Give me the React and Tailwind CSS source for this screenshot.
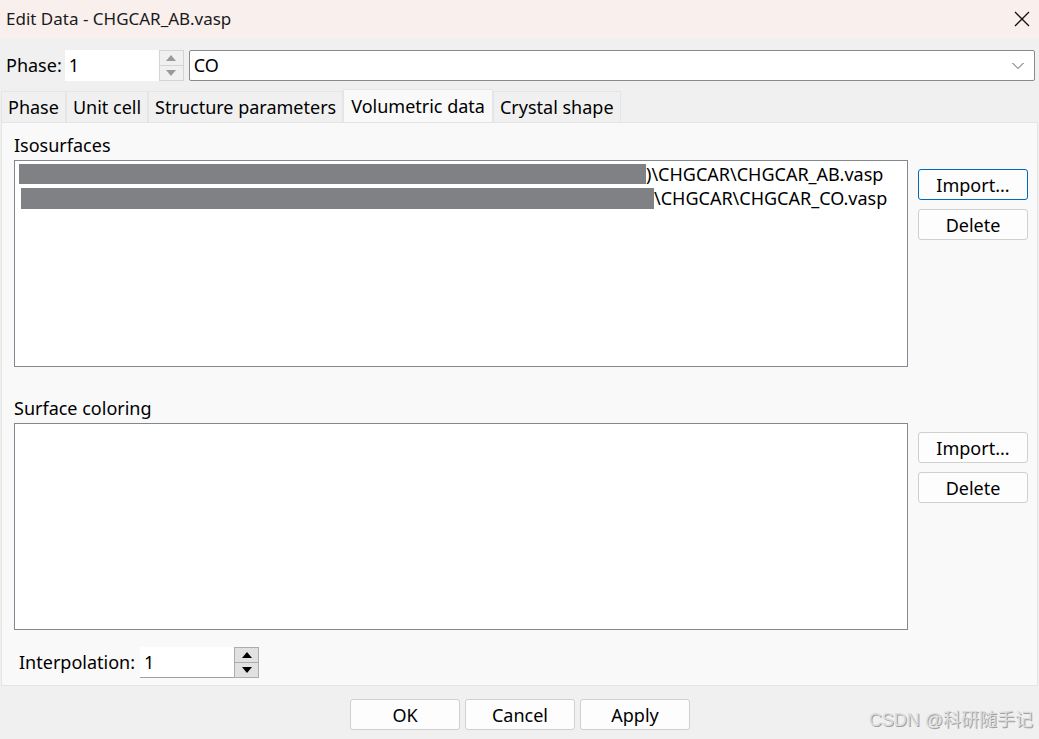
import React from "react";

const font = { fontFamily: '"Noto Sans", "Open Sans", sans-serif' };

function Spinner({ dark }) {
  const arrow = dark ? "#000000" : "#9a9a9a";
  return (
    <div className={`flex h-full w-[25px] flex-col border ${dark ? "border-[#adadad] bg-[#e1e1e1]" : "border-[#d4d4d4] bg-[#f0f0f0]"}`}>
      <div className={`flex flex-1 items-center justify-center border-b ${dark ? "border-[#adadad]" : "border-[#d4d4d4]"}`}>
        <svg width="10" height="6" viewBox="0 0 10 6"><path d="M0 6 L5 0 L10 6 Z" fill={arrow} /></svg>
      </div>
      <div className="flex flex-1 items-center justify-center">
        <svg width="10" height="6" viewBox="0 0 10 6"><path d="M0 0 L5 6 L10 0 Z" fill={arrow} /></svg>
      </div>
    </div>
  );
}

function SideButton({ children, focused }) {
  return (
    <button
      className={`h-[31px] w-[110px] rounded-[3px] border bg-[#fdfdfd] text-[18px] leading-none text-black ${focused ? "border-[#0067c0]" : "border-[#d0d0d0]"}`}
    >
      {children}
    </button>
  );
}

function Tab({ label, active }) {
  return active ? (
    <div className="-mb-px flex h-[34px] items-center border border-b-0 border-[#e5e5e5] bg-[#f9f9f9] px-[7px] text-[18px]">
      {label}
    </div>
  ) : (
    <div className="mt-[2px] flex h-[31px] items-center border border-b-0 border-[#e5e5e5] bg-[#f0f0f0] px-[6px] text-[18px]">
      {label}
    </div>
  );
}

export default function App() {
  return (
    <div className="flex h-[739px] w-[1039px] flex-col overflow-hidden bg-[#f0f0f0] text-black" style={font}>
      <div className="flex h-[38px] items-center justify-between bg-[#f9efed] pl-[6px] pr-[8px]">
        <span className="text-[17px] text-[#1a1a1a]">Edit Data - CHGCAR_AB.vasp</span>
        <svg width="16" height="16" viewBox="0 0 16 16" className="mr-[1px]">
          <path d="M1 1 L15 15 M15 1 L1 15" stroke="#111" strokeWidth="1.3" />
        </svg>
      </div>

      <div className="mt-[12px] flex h-[31px] items-center pl-[6px] pr-[4px]">
        <span className="mr-[3px] text-[18px]">Phase:</span>
        <div className="flex h-full w-[94px] items-center bg-white pl-[4px] text-[18px]">1</div>
        <Spinner />
        <div className="ml-[5px] flex h-full flex-1 items-center justify-between rounded-[2px] border border-[#8a8a8a] bg-white pl-[4px] pr-[10px] text-[18px]">
          <span>CO</span>
          <svg width="12" height="8" viewBox="0 0 12 8"><path d="M0.5 1 L6 6.5 L11.5 1" stroke="#555" fill="none" strokeWidth="1" /></svg>
        </div>
      </div>

      <div className="mt-[8px] flex items-end pl-[1px]">
        <Tab label="Phase" />
        <Tab label="Unit cell" />
        <Tab label="Structure parameters" />
        <Tab label="Volumetric data" active />
        <Tab label="Crystal shape" />
      </div>

      <div className="mx-[1px] flex h-[564px] flex-col border border-[#e5e5e5] bg-[#f9f9f9] pl-[12px] pr-[9px]">
        <div className="mt-[10px] text-[18px] leading-[24px]">Isosurfaces</div>
        <div className="mt-[3px] flex gap-[10px]">
          <div className="h-[207px] flex-1 border border-[#828790] bg-white pl-[4px] pt-[1px] text-[18px] leading-[24px]">
            <div className="flex items-center">
              <div className="h-[20px] w-[627px] bg-[#808184]" />
              <span>)\CHGCAR\CHGCAR_AB.vasp</span>
            </div>
            <div className="flex items-center">
              <div className="ml-[2px] h-[21px] w-[633px] bg-[#808184]" />
              <span>\CHGCAR\CHGCAR_CO.vasp</span>
            </div>
          </div>
          <div className="flex flex-col gap-[9px] pt-[9px]">
            <SideButton focused>Import...</SideButton>
            <SideButton>Delete</SideButton>
          </div>
        </div>

        <div className="mt-[29px] text-[18px] leading-[24px]">Surface coloring</div>
        <div className="mt-[3px] flex gap-[10px]">
          <div className="h-[207px] flex-1 border border-[#828790] bg-white" />
          <div className="flex flex-col gap-[9px] pt-[9px]">
            <SideButton>Import...</SideButton>
            <SideButton>Delete</SideButton>
          </div>
        </div>

        <div className="mt-[17px] flex h-[31px] items-center pl-[5px]">
          <span className="mr-[5px] text-[18px]">Interpolation:</span>
          <div className="flex h-full w-[94px] items-center border-b border-[#a0a0a0] bg-white pl-[4px] text-[18px]">1</div>
          <Spinner dark />
        </div>
      </div>

      <div className="relative flex flex-1 justify-center pt-[13px]">
        <div className="ml-[1px] flex gap-[5px]">
          <SideButton>OK</SideButton>
          <SideButton>Cancel</SideButton>
          <SideButton>Apply</SideButton>
        </div>
        <span
          className="absolute right-[6px] top-[21px] text-[18px] text-[#dcdcdc]"
          style={{ textShadow: "1px 1px 0 #a0a0a0", fontFamily: '"Liberation Sans", "Noto Sans CJK SC", sans-serif' }}
        >
          CSDN @科研随手记
        </span>
      </div>
    </div>
  );
}
